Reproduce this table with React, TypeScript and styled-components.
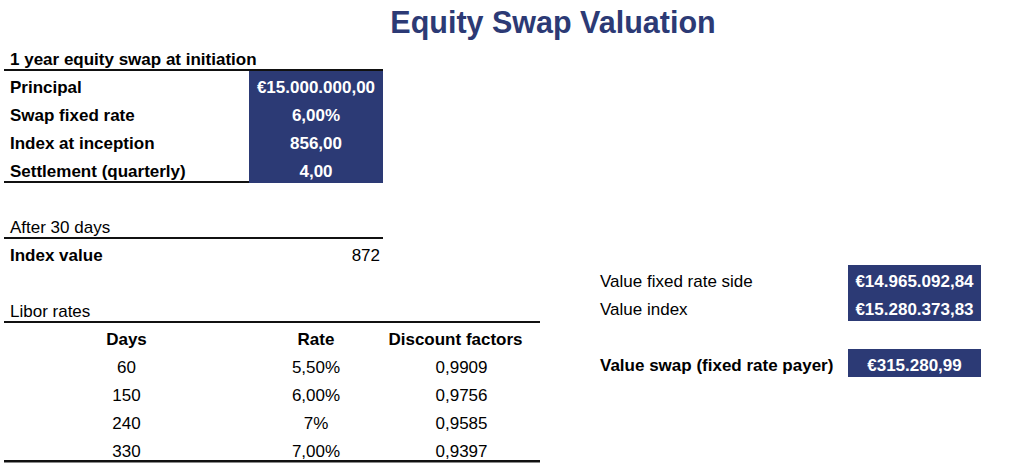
import React from "react";
import styled, { createGlobalStyle } from "styled-components";

const NAVY = "#2c3a75";
const INK = "#111111";

const Global = createGlobalStyle`
  html, body { margin: 0; padding: 0; background: #ffffff; }
  body { font-family: "Liberation Sans", Arial, Helvetica, sans-serif; color: #000; }
`;

const Page = styled.div`
  width: 1030px;
  height: 466px;
  overflow: hidden;
  background: #ffffff;
  display: flex;
  flex-direction: column;
`;

const Title = styled.h1`
  margin: 0;
  height: 43px;
  box-sizing: border-box;
  padding: 5px 0 0 76px;
  text-align: center;
  font-size: 30.5px;
  line-height: 34px;
  font-weight: 700;
  color: ${NAVY};
`;

const Body = styled.div`
  display: flex;
  align-items: flex-start;
  padding-left: 4px;
`;

const Sheet = styled.div`
  display: flex;
  flex-direction: column;
  width: 536px;
`;

const Side = styled.div`
  display: flex;
  flex-direction: column;
  margin-left: 54px;
  padding-top: 222px;
`;

const Row = styled.div<{ $cols: string }>`
  display: grid;
  grid-template-columns: ${(p) => p.$cols};
  height: 28px;
`;

type Rule = "none" | "single" | "double";
type Align = "left" | "center" | "right";

const ruleShadow = (r: Rule) =>
  r === "single"
    ? `inset 0 -2px 0 ${INK}`
    : r === "double"
    ? `inset 0 -1px 0 #8a8a8a, inset 0 -3px 0 ${INK}`
    : "none";

const Cell = styled.div<{
  $span?: number;
  $bold?: boolean;
  $align?: Align;
  $fill?: boolean;
  $rule?: Rule;
  $shift?: number;
}>`
  grid-column: span ${(p) => p.$span ?? 1};
  display: flex;
  align-items: flex-end;
  justify-content: ${(p) =>
    p.$align === "center" ? "center" : p.$align === "right" ? "flex-end" : "flex-start"};
  padding: 0 ${(p) => (p.$align === "right" ? 3 : 6) + (p.$shift ?? 0)}px 0 6px;
  font-size: 17px;
  line-height: 23px;
  font-weight: ${(p) => (p.$bold || p.$fill ? 700 : 400)};
  white-space: nowrap;
  background: ${(p) => (p.$fill ? NAVY : "transparent")};
  color: ${(p) => (p.$fill ? "#ffffff" : "#000000")};
  box-shadow: ${(p) => ruleShadow(p.$rule ?? "none")};
`;

const SHEET_COLS = "245px 134px 157px";
const SIDE_COLS = "254px 133px";

const inputs = [
  { label: "Principal", value: "€15.000.000,00" },
  { label: "Swap fixed rate", value: "6,00%" },
  { label: "Index at inception", value: "856,00" },
  { label: "Settlement (quarterly)", value: "4,00" },
];

const libor = [
  { days: "60", rate: "5,50%", df: "0,9909" },
  { days: "150", rate: "6,00%", df: "0,9756" },
  { days: "240", rate: "7%", df: "0,9585" },
  { days: "330", rate: "7,00%", df: "0,9397" },
];

export default function App() {
  return (
    <Page>
      <Global />
      <Title>Equity Swap Valuation</Title>
      <Body>
        <Sheet>
          <Row $cols={SHEET_COLS}>
            <Cell $span={2} $bold $rule="single">
              1 year equity swap at initiation
            </Cell>
          </Row>
          {inputs.map((r, i) => (
            <Row $cols={SHEET_COLS} key={r.label}>
              <Cell $bold $rule={i === inputs.length - 1 ? "single" : "none"}>
                {r.label}
              </Cell>
              <Cell $fill $align="center">
                {r.value}
              </Cell>
            </Row>
          ))}
          <Row $cols={SHEET_COLS} />
          <Row $cols={SHEET_COLS}>
            <Cell $span={2} $rule="single">
              After 30 days
            </Cell>
          </Row>
          <Row $cols={SHEET_COLS}>
            <Cell $bold>Index value</Cell>
            <Cell $align="right">872</Cell>
          </Row>
          <Row $cols={SHEET_COLS} />
          <Row $cols={SHEET_COLS}>
            <Cell $span={3} $rule="single">
              Libor rates
            </Cell>
          </Row>
          <Row $cols={SHEET_COLS}>
            <Cell $bold $align="center">Days</Cell>
            <Cell $bold $align="center">Rate</Cell>
            <Cell $bold $align="center" $shift={12}>Discount factors</Cell>
          </Row>
          {libor.map((r, i) => {
            const rule: Rule = i === libor.length - 1 ? "double" : "none";
            return (
              <Row $cols={SHEET_COLS} key={r.days}>
                <Cell $align="center" $rule={rule}>{r.days}</Cell>
                <Cell $align="center" $rule={rule}>{r.rate}</Cell>
                <Cell $align="center" $rule={rule}>{r.df}</Cell>
              </Row>
            );
          })}
        </Sheet>
        <Side>
          <Row $cols={SIDE_COLS}>
            <Cell>Value fixed rate side</Cell>
            <Cell $fill $align="center">€14.965.092,84</Cell>
          </Row>
          <Row $cols={SIDE_COLS}>
            <Cell>Value index</Cell>
            <Cell $fill $align="center">€15.280.373,83</Cell>
          </Row>
          <Row $cols={SIDE_COLS} />
          <Row $cols={SIDE_COLS}>
            <Cell $bold>Value swap (fixed rate payer)</Cell>
            <Cell $fill $align="center">€315.280,99</Cell>
          </Row>
        </Side>
      </Body>
    </Page>
  );
}
